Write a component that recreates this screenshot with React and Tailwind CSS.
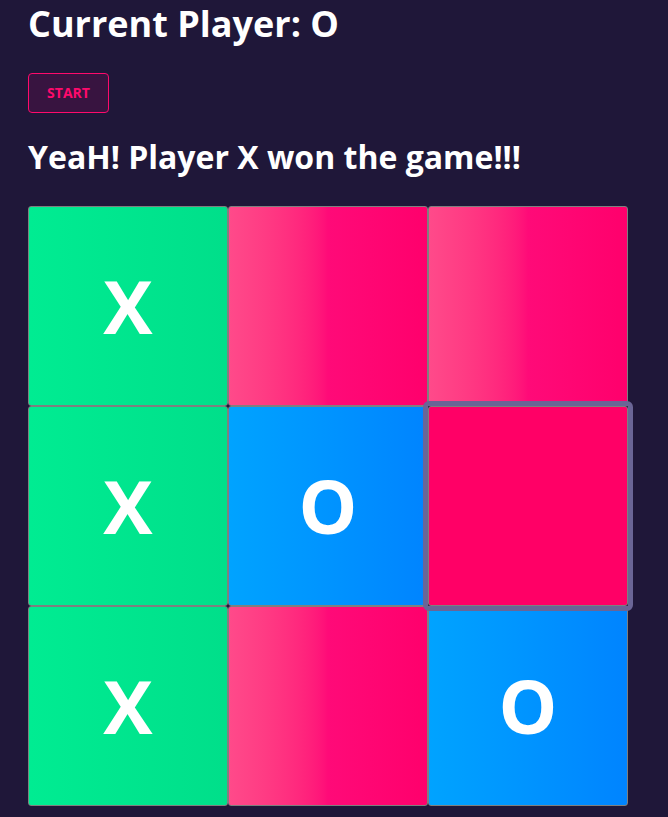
import React, { useState } from 'react';

const font = { fontFamily: '"Open Sans", "Noto Sans", sans-serif' };

const initialBoard = ['X', '', '', 'X', 'O', '', 'X', '', 'O'];

const cellColor = (value, focused) => {
  if (value === 'X') return 'bg-gradient-to-r from-[#00ec92] to-[#00df8a]';
  if (value === 'O') return 'bg-gradient-to-r from-[#00a3ff] to-[#0084ff]';
  if (focused) return 'bg-[#ff0066]';
  return 'bg-gradient-to-r from-[#ff4a8a] via-[#ff0a78] via-50% to-[#ff006c]';
};

const App = () => {
  const [board] = useState(initialBoard);
  const [focused] = useState(5);

  return (
    <div className="min-h-screen bg-[#1f1739] text-white px-7" style={font}>
      <h1 className="text-[36px] font-bold leading-[48px]">Current Player: O</h1>

      <button className="mt-[25px] h-10 w-[81px] rounded border border-[#ff0a6c] bg-[#381440] text-sm font-bold uppercase text-[#ff0a6c]">
        Start
      </button>

      <h2 className="mt-[24px] text-[32px] font-bold leading-10">YeaH! Player X won the game!!!</h2>

      <div className="mt-[29px] grid w-[600px] grid-cols-3">
        {board.map((value, i) => (
          <div
            key={i}
            className={`relative flex h-[200px] items-center justify-center rounded-[3px] border border-[#7f7f7f] ${cellColor(value, focused === i)}`}
          >
            {focused === i && (
              <div className="absolute -inset-[6px] z-10 rounded-md border-[5px] border-[#6a6596]" />
            )}
            <span className="text-[74px] font-bold leading-none">{value}</span>
          </div>
        ))}
      </div>
    </div>
  );
};

export default App;
